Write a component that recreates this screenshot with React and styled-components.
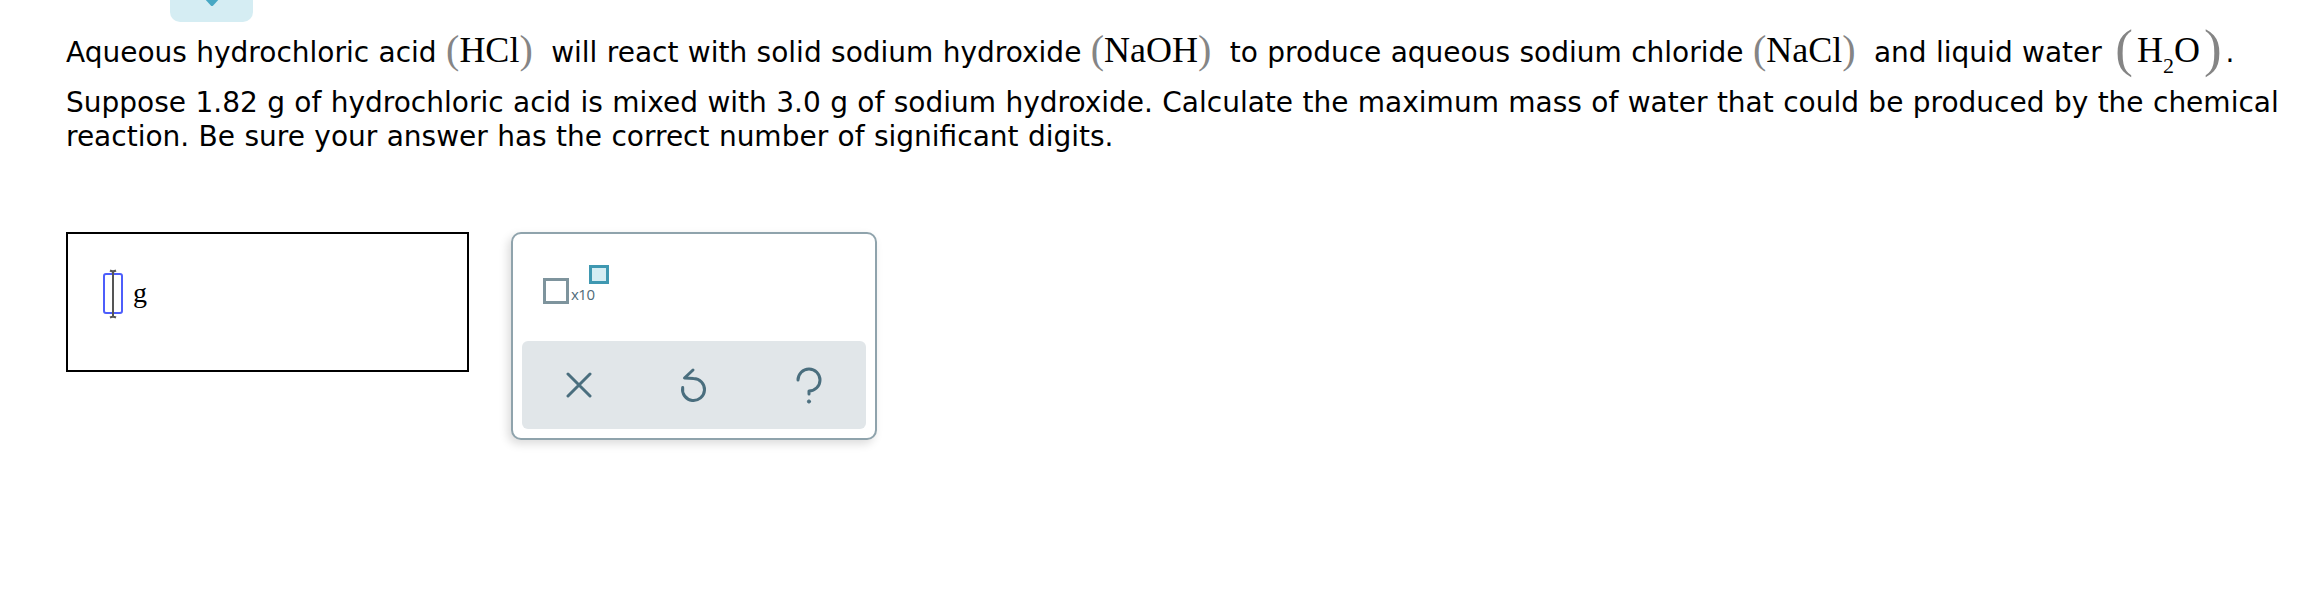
import styled, { createGlobalStyle } from "styled-components";

const GlobalStyle = createGlobalStyle`
  html, body {
    margin: 0;
    padding: 0;
    background: #fff;
  }
  body {
    font-family: "DejaVu Sans", Verdana, sans-serif;
    color: #000;
  }
`;

const Page = styled.div`
  width: 2300px;
  height: 610px;
  padding-left: 66px;
  box-sizing: border-box;
  overflow: hidden;
`;

const TopTab = styled.div`
  width: 83px;
  height: 22px;
  margin-left: 104px;
  background: #d5edf3;
  border-radius: 0 0 10px 10px;
  display: flex;
  justify-content: center;
  align-items: flex-start;
`;

const Question = styled.div`
  width: 2230px;
  font-size: 28px;
  word-spacing: 0.5px;
`;

const Statement = styled.p`
  margin: 11px 0 0;
  line-height: 40px;
  white-space: nowrap;
`;

const Task = styled.p`
  margin: 13px 0 0;
  line-height: 34px;
`;

const Formula = styled.span`
  font-family: "Liberation Serif", "Times New Roman", serif;
  font-size: 36px;
  line-height: 0;
  word-spacing: 0;
  margin-right: ${(p) => (p.$tight ? "0" : "9px")};
`;

const Paren = styled.span`
  color: #858585;
  font-size: ${(p) => p.$size || 40}px;
  font-weight: 300;
  vertical-align: ${(p) => (p.$size ? "-4px" : "-1px")};
  margin: 0 ${(p) => (p.$size ? "4px" : "0")};
`;

const Sub = styled.sub`
  font-size: 22px;
  vertical-align: -11px;
  line-height: 0;
`;

const AnswerRow = styled.div`
  display: flex;
  align-items: flex-start;
  margin-top: 78px;
`;

const AnswerBox = styled.div`
  width: 403px;
  height: 140px;
  box-sizing: border-box;
  border: 2px solid #000;
  display: flex;
  align-items: flex-start;
  padding: 39px 0 0 35px;
`;

const Slot = styled.span`
  position: relative;
  display: inline-block;
  width: 20px;
  height: 41px;
  box-sizing: border-box;
  border: 2px solid #4d5efb;
  border-radius: 3px;
`;

const Caret = styled.svg`
  position: absolute;
  left: 3px;
  top: -6px;
`;

const Unit = styled.span`
  font-family: "Liberation Serif", "Times New Roman", serif;
  font-size: 28px;
  line-height: 28px;
  margin: 6px 0 0 10px;
`;

const Palette = styled.div`
  width: 366px;
  height: 208px;
  margin-left: 42px;
  box-sizing: border-box;
  border: 2px solid #8fa3ac;
  border-radius: 10px;
  background: #fff;
  box-shadow: -3px 4px 10px rgba(0, 0, 0, 0.14);
  display: flex;
  flex-direction: column;
`;

const KeyArea = styled.div`
  height: 107px;
  box-sizing: border-box;
  padding: 31px 0 0 30px;
`;

const SciKey = styled.div`
  display: inline-flex;
  align-items: flex-end;
  height: 39px;
`;

const BaseBox = styled.span`
  width: 26px;
  height: 26px;
  box-sizing: border-box;
  border: 3px solid #7e949d;
`;

const TimesTen = styled.span`
  font-family: "Open Sans", "Liberation Sans", sans-serif;
  font-size: 15px;
  line-height: 15px;
  color: #4f6b78;
  margin: 0 0 2px 2px;
  letter-spacing: -0.5px;
`;

const ExpBox = styled.span`
  align-self: flex-start;
  width: 20px;
  height: 19px;
  box-sizing: border-box;
  border: 3px solid #3f98b1;
  background: #d5edf3;
  margin-left: -6px;
`;

const ToolBar = styled.div`
  margin: 0 9px 9px;
  height: 88px;
  background: #e1e6e9;
  border-radius: 6px;
  display: grid;
  grid-template-columns: repeat(3, 1fr);
  align-items: center;
  justify-items: center;
`;

const ToolIcon = styled.svg`
  display: block;
  stroke: #4a6e7e;
  fill: none;
  stroke-width: 3;
  stroke-linecap: round;
  stroke-linejoin: round;
`;

const App = () => {
  return (
    <Page>
      <GlobalStyle />
      <TopTab>
        <svg width="18" height="7" viewBox="0 0 18 7">
          <path d="M0 -3 L18 -3 L10.2 5.4 Q9 6.6 7.8 5.4 Z" fill="#48a8c4" />
        </svg>
      </TopTab>
      <Question>
        <Statement>
          Aqueous hydrochloric acid{" "}
          <Formula>
            <Paren>(</Paren>HCl<Paren>)</Paren>
          </Formula>{" "}
          will react with solid sodium hydroxide{" "}
          <Formula>
            <Paren>(</Paren>NaOH<Paren>)</Paren>
          </Formula>{" "}
          to produce aqueous sodium chloride{" "}
          <Formula>
            <Paren>(</Paren>NaCl<Paren>)</Paren>
          </Formula>{" "}
          and liquid water{" "}
          <Formula $tight>
            <Paren $size={53}>(</Paren>H<Sub>2</Sub>O<Paren $size={53}>)</Paren>
          </Formula>
          .
        </Statement>
        <Task>
          Suppose 1.82 g of hydrochloric acid is mixed with 3.0 g of sodium
          hydroxide. Calculate the maximum mass of water that could be produced
          by the chemical reaction. Be sure your answer has the correct number
          of significant digits.
        </Task>
      </Question>
      <AnswerRow>
        <AnswerBox>
          <Slot>
            <Caret width="10" height="50" viewBox="0 0 10 50">
              <path
                d="M5 2 V48 M2 1.5 Q5 3 8 1.5 M2 48.5 Q5 47 8 48.5"
                stroke="#555"
                strokeWidth="2"
                fill="none"
              />
            </Caret>
          </Slot>
          <Unit>g</Unit>
        </AnswerBox>
        <Palette>
          <KeyArea>
            <SciKey>
              <BaseBox />
              <TimesTen>x10</TimesTen>
              <ExpBox />
            </SciKey>
          </KeyArea>
          <ToolBar>
            <ToolIcon width="26" height="26" viewBox="0 0 26 26">
              <path d="M2 2 L24 24 M24 2 L2 24" />
            </ToolIcon>
            <ToolIcon width="30" height="36" viewBox="0 0 30 36">
              <path d="M14 3 L5.5 11 L14.5 11.5 A11 11 0 1 1 3.7 20.5" />
            </ToolIcon>
            <ToolIcon width="28" height="40" viewBox="0 0 28 40">
              <path d="M3 15 A11 11 0 1 1 14 26 L14 29" />
              <circle cx="14" cy="36.5" r="1.6" fill="#4a6e7e" strokeWidth="1" />
            </ToolIcon>
          </ToolBar>
        </Palette>
      </AnswerRow>
    </Page>
  );
};

export default App;
